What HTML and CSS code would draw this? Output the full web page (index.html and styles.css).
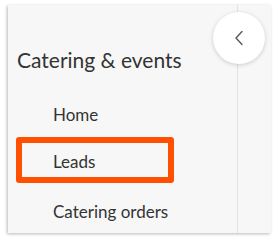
FILE: index.html
```html
<!DOCTYPE html>
<html>
<head>
<meta charset="utf-8">
<link rel="stylesheet" href="styles.css">
</head>
<body>
<div class="card">
  <nav class="panel">
    <h1 class="title">Catering &amp; events</h1>
    <ul class="menu">
      <li class="item item-first">Home</li>
      <li class="item item-marked">Leads</li>
      <li class="item item-last">Catering orders</li>
    </ul>
  </nav>
  <div class="strip"></div>
  <button class="collapse" aria-label="Collapse">
    <svg width="10" height="16" viewBox="0 0 10 16"><path d="M8 1.5 L2 8 L8 14.5" fill="none" stroke="#5a5a5a" stroke-width="1.4" stroke-linecap="round" stroke-linejoin="round"/></svg>
  </button>
</div>
</body>
</html>
```
FILE: styles.css
```css
html, body {
  margin: 0;
  padding: 0;
  background: #ffffff;
}
body {
  width: 279px;
  height: 244px;
  overflow: hidden;
  font-family: Lato, "Noto Sans", sans-serif;
  color: #333333;
}
.card {
  position: relative;
  display: flex;
  margin: 5px 0 0 8px;
  width: 263px;
  height: 228px;
  background: #f7f7f7;
  box-shadow: -1px 1px 3px rgba(0, 0, 0, 0.28);
}
.panel {
  width: 230px;
  border-right: 1px solid #e2e2e2;
  box-sizing: border-box;
  padding: 0 0 0 9px;
}
.strip {
  flex: 1;
}
.title {
  margin: 43px 0 0 0;
  font-size: 21px;
  font-weight: 400;
  line-height: 24px;
  letter-spacing: 0;
}
.menu {
  list-style: none;
  margin: 19px 0 0 0;
  padding: 0;
}
.item {
  position: relative;
  height: 48px;
  line-height: 48px;
  font-size: 17px;
  padding-left: 36px;
}
.item-first {
  height: 47px;
}
.item-last {
  margin-top: 2px;
}
.item-marked::after {
  content: "";
  position: absolute;
  left: -1px;
  top: -1px;
  width: 158px;
  height: 46px;
  box-sizing: border-box;
  border: 6px solid #ff4f00;
  border-radius: 3px;
}
.collapse {
  position: absolute;
  left: 205px;
  top: 7px;
  width: 52px;
  height: 52px;
  border: none;
  border-radius: 50%;
  background: #ffffff;
  box-shadow: 0 1px 4px rgba(0, 0, 0, 0.18);
  display: flex;
  align-items: center;
  justify-content: center;
  padding: 0;
}
```
